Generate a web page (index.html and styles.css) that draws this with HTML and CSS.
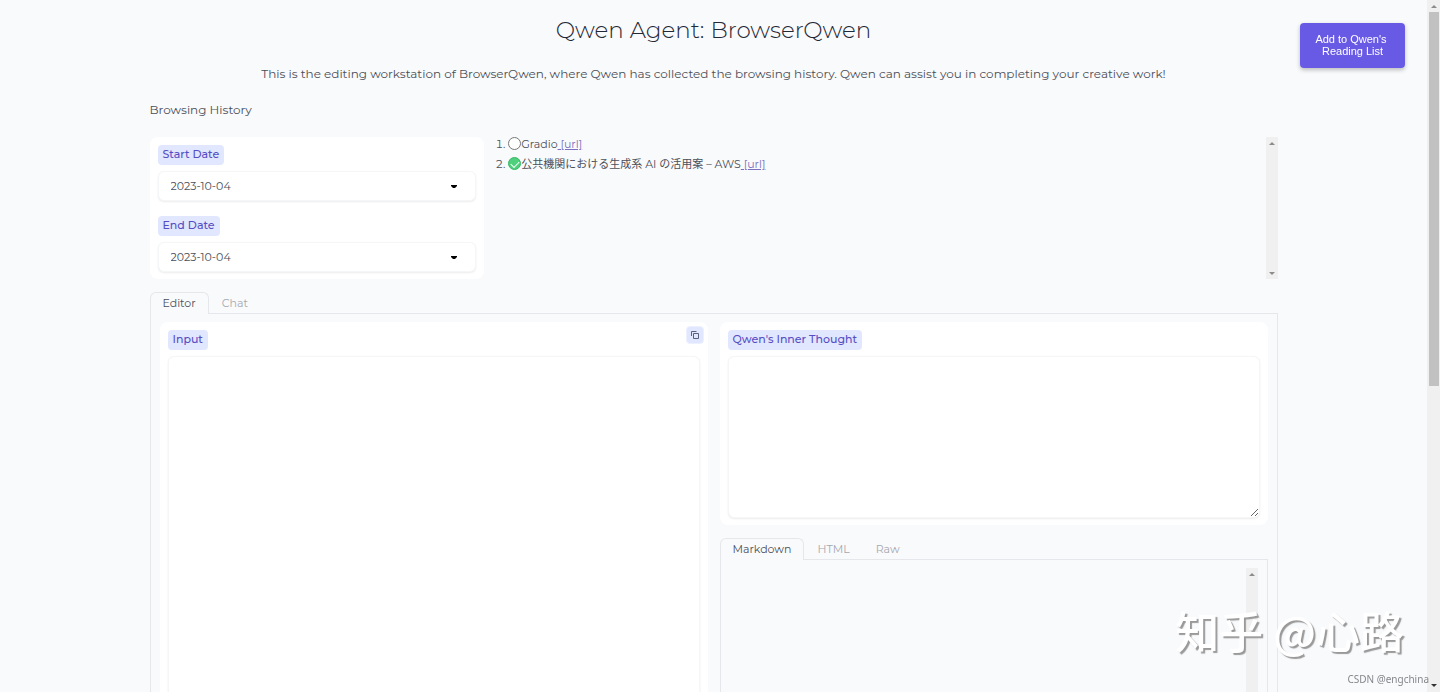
FILE: index.html
```
<!DOCTYPE html>
<html lang="en">
<head>
    <meta charset="UTF-8">
    <meta name="viewport" content="width=device-width, initial-scale=1.0">
    <title>Qwen Agent: BrowserQwen</title>
    <link rel="stylesheet" href="styles.css">
</head>
<body>
    <div class="viewport">
        <main class="page">
            <div class="container">
                <h1 class="title">Qwen Agent: BrowserQwen</h1>
                <p class="description">This is the editing workstation of BrowserQwen, where Qwen has collected the browsing history. Qwen can assist you in completing your creative work!</p>
                <h2 class="section-title">Browsing History</h2>

                <div class="history">
                    <div class="card dates">
                        <div class="field">
                            <label class="label" for="start-date">Start Date</label>
                            <div class="select-wrap">
                                <select class="select" id="start-date"><option>2023-10-04</option></select>
                                <svg class="caret" viewBox="0 0 8 4" aria-hidden="true"><path d="M1 0h6v1L5 3H3L1 1z"/></svg>
                            </div>
                        </div>
                        <div class="field">
                            <label class="label" for="end-date">End Date</label>
                            <div class="select-wrap">
                                <select class="select" id="end-date"><option>2023-10-04</option></select>
                                <svg class="caret" viewBox="0 0 8 4" aria-hidden="true"><path d="M1 0h6v1L5 3H3L1 1z"/></svg>
                            </div>
                        </div>
                    </div>
                    <div class="links">
                        <ol class="link-list">
                            <li><input type="checkbox" class="check" id="page-1"><label for="page-1">Gradio</label><a href="#">&nbsp;[url]</a></li>
                            <li><input type="checkbox" class="check" id="page-2" checked><label for="page-2">公共機関における生成系 AI の活用案 – AWS</label><a href="#">&nbsp;[url]</a></li>
                        </ol>
                        <div class="scrollbar">
                            <svg class="arrow" viewBox="0 0 12 12"><path d="M3 8h6L6 5z"/></svg>
                            <svg class="arrow" viewBox="0 0 12 12"><path d="M3 5h6L6 8z"/></svg>
                        </div>
                    </div>
                </div>

                <div class="tabs" role="tablist">
                    <button class="tab selected" role="tab">Editor</button>
                    <button class="tab" role="tab">Chat</button>
                </div>
                <div class="tab-panel editor">
                    <div class="card">
                        <div class="card-head">
                            <label class="label" for="editor-input">Input</label>
                            <button class="copy" aria-label="Copy">
                                <svg viewBox="0 0 10 10"><path d="M3.5 3.5h5v5h-5zM1.5 6V1.5H6.5"/></svg>
                            </button>
                        </div>
                        <textarea class="textbox tall" id="editor-input"></textarea>
                    </div>
                    <div class="side">
                        <div class="card">
                            <div class="card-head">
                                <label class="label" for="thought">Qwen's Inner Thought</label>
                            </div>
                            <textarea class="textbox" id="thought"></textarea>
                        </div>
                        <div class="output">
                            <div class="tabs" role="tablist">
                                <button class="tab selected" role="tab">Markdown</button>
                                <button class="tab" role="tab">HTML</button>
                                <button class="tab" role="tab">Raw</button>
                            </div>
                            <div class="tab-panel preview">
                                <div class="scrollbar">
                                    <svg class="arrow" viewBox="0 0 12 12"><path d="M3 8h6L6 5z"/></svg>
                                </div>
                            </div>
                        </div>
                    </div>
                </div>
            </div>
        </main>
        <div class="scrollbar page-scrollbar">
            <svg class="arrow" viewBox="0 0 12 12"><path d="M3 8h6L6 5z"/></svg>
            <div class="thumb"></div>
            <svg class="arrow dark" viewBox="0 0 12 12"><path d="M3 4h6L6 7z"/></svg>
        </div>
    </div>

    <button class="add-button">Add to Qwen's<br>&nbsp;Reading List</button>
    <div class="watermark">知乎 @心路</div>
    <div class="credit">CSDN @engchina</div>
</body>
</html>
```

FILE: styles.css
```
* {
    box-sizing: border-box;
}

body {
    margin: 0;
    background-color: #f9fafc;
    color: #4b4f58;
    font-family: Montserrat, Inter, "Noto Sans CJK JP", sans-serif;
    font-size: 11px;
    font-weight: 400;
    line-height: 18px;
}

button,
select,
textarea {
    font: inherit;
    color: inherit;
}

.viewport {
    display: flex;
    height: 100vh;
    overflow: hidden;
}

.page {
    flex: 1;
    overflow: hidden;
}

.container {
    max-width: 1128px;
    margin: 0 auto;
    padding-top: 14px;
}

.title {
    margin: 0;
    color: #1f2937;
    font-size: 23px;
    font-weight: 300;
    line-height: 32px;
    text-align: center;
}

.description {
    margin: 18px 0 16px;
    font-size: 12px;
    line-height: 20px;
    text-align: center;
}

.section-title {
    margin: 0 0 17px;
    font-size: 12px;
    font-weight: 400;
    line-height: 20px;
}

.card {
    padding: 8px 8px 7px;
    background-color: #fff;
    border-radius: 8px;
}

.label {
    display: inline-block;
    padding: 0 5px 2px;
    background-color: #e0e7ff;
    border-radius: 4px;
    color: #574dc4;
    font-weight: 500;
}

/* Browsing history */
.history {
    display: grid;
    grid-template-columns: 3fr 7fr;
    gap: 12px;
    margin-bottom: 13px;
}

.dates {
    display: flex;
    flex-direction: column;
    gap: 15px;
}

.field {
    display: flex;
    flex-direction: column;
    align-items: flex-start;
    gap: 6px;
}

.select-wrap {
    position: relative;
    width: 100%;
}

.select {
    display: block;
    width: 100%;
    height: 30px;
    padding: 0 12px;
    appearance: none;
    background-color: #fff;
    border: 1px solid #f5f6f8;
    border-radius: 6px;
    box-shadow: 0 1px 2px rgba(0, 0, 0, 0.08);
}

.caret {
    position: absolute;
    top: 14px;
    right: 18px;
    width: 8px;
    height: 4px;
}

.links {
    display: flex;
    justify-content: space-between;
}

.link-list {
    margin: 0;
    padding-left: 12px;
    line-height: 14px;
}

.link-list li {
    height: 14px;
    margin-bottom: 6px;
    white-space: nowrap;
}

.link-list a {
    color: #7b6fc0;
}

.check {
    display: inline-grid;
    place-items: center;
    width: 13px;
    height: 13px;
    margin: 0;
    appearance: none;
    background-color: #fff;
    border: 1px solid #777;
    border-radius: 50%;
    vertical-align: top;
}

.check:checked {
    background-color: #4fd07c;
    border-color: #36b866;
}

.check:checked::after {
    content: "";
    width: 7px;
    height: 4px;
    border: solid #fff;
    border-width: 0 0 1px 1px;
    transform: rotate(-45deg);
}

.scrollbar {
    display: flex;
    flex-direction: column;
    justify-content: space-between;
    width: 12px;
    background-color: #f0f0f0;
}

.arrow {
    width: 12px;
    height: 12px;
    fill: #8b8b8b;
}

.dark {
    fill: #333;
}

/* Tabs */
.tabs {
    display: flex;
    height: 22px;
    border-bottom: 1px solid #e5e7eb;
}

.tab {
    height: 22px;
    padding: 0 12px 2px;
    background: none;
    border: 1px solid transparent;
    border-bottom: none;
    border-radius: 6px 6px 0 0;
    color: #a5a8b0;
}

.selected {
    background-color: #f9fafc;
    border-color: #e5e7eb;
    color: #4b4f58;
}

.tab-panel {
    border: 1px solid #e5e7eb;
    border-top: none;
}

.editor {
    display: grid;
    grid-template-columns: 1fr 1fr;
    gap: 12px;
    padding: 8px 9px;
}

.card-head {
    display: flex;
    align-items: flex-start;
    justify-content: space-between;
}

.copy {
    width: 18px;
    height: 18px;
    padding: 3px;
    margin: -4px -4px 0 0;
    background-color: #e0e7ff;
    border: 1px solid #edf0ff;
    border-radius: 4px;
}

.copy svg {
    display: block;
    fill: none;
    stroke: #596080;
    stroke-width: 1;
}

.textbox {
    display: block;
    width: 100%;
    height: 162px;
    margin-top: 6px;
    background-color: #fff;
    border: 1px solid #f5f6f8;
    border-radius: 6px;
    box-shadow: 0 1px 2px rgba(0, 0, 0, 0.08);
    resize: vertical;
}

.tall {
    height: 720px;
}

.output {
    margin-top: 13px;
}

.preview {
    display: flex;
    justify-content: flex-end;
    height: 480px;
    padding: 8px 9px;
}

.page-scrollbar {
    justify-content: flex-start;
    align-items: center;
    width: 13px;
}

.thumb {
    width: 10px;
    height: 54%;
    background-color: #c1c1c1;
}

.page-scrollbar .dark {
    margin-top: auto;
}

/* Floating items */
.add-button {
    position: fixed;
    top: 23px;
    right: 35px;
    width: 105px;
    height: 45px;
    padding: 0 3px 2px 0;
    background-color: #695ae6;
    border: none;
    border-radius: 4px;
    box-shadow: 0 2px 4px rgba(0, 0, 0, 0.25);
    color: #fff;
    font-family: "Liberation Sans", Arial, sans-serif;
    font-size: 11px;
    line-height: 12px;
}

.watermark {
    position: fixed;
    right: 36px;
    bottom: 30px;
    color: #fff;
    font-family: "Noto Sans CJK SC", sans-serif;
    font-size: 44px;
    font-weight: 500;
    line-height: 64px;
    text-shadow: 2px 2px 1px #999;
}

.credit {
    position: fixed;
    right: 11px;
    bottom: 4px;
    color: #85878a;
    font-family: "Noto Sans", sans-serif;
    font-size: 10px;
}
```
